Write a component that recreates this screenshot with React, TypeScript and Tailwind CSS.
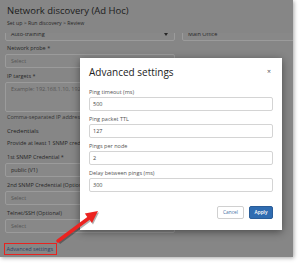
import React from "react";

const font = { fontFamily: '"Open Sans", "Liberation Sans", sans-serif' };

function BgLabel({ children, className = "" }: { children: React.ReactNode; className?: string }) {
  return (
    <div className={"h-[8px] leading-[8px] pl-[2px] text-[5.5px] text-[#262626] whitespace-nowrap overflow-hidden " + className}>
      {children}
    </div>
  );
}

function BgBox({ children, className = "", h = "h-[14px]", placeholder = false }: { children?: React.ReactNode; className?: string; h?: string; placeholder?: boolean }) {
  return (
    <div
      className={
        "relative border border-[#9b9b9b] rounded-[2px] bg-[#888888] px-[5px] flex items-center text-[5.5px] leading-[7px] whitespace-nowrap overflow-hidden " +
        h +
        " " +
        (placeholder ? "text-[#555] " : "text-[#262626] ") +
        className
      }
    >
      {children}
    </div>
  );
}

function ModalField({ label, value, className = "" }: { label: string; value: string; className?: string }) {
  return (
    <div className={className}>
      <div className="h-[8px] leading-[8px] text-[5.5px] text-[#555] whitespace-nowrap">{label}</div>
      <div className="mt-[1px] h-[14px] border border-[#d4d4d4] rounded-[2px] px-[3px] flex items-center text-[5.5px] leading-[7px] text-[#444]">
        {value}
      </div>
    </div>
  );
}

export default function App() {
  return (
    <div className="w-[300px] h-[264px] bg-white relative overflow-hidden" style={font}>
      <div className="w-[293px] h-[257px] bg-[#868686] relative overflow-hidden shadow-[1px_1px_4px_rgba(0,0,0,0.35)] flex flex-col">
        {/* header */}
        <div className="h-[33px] shrink-0 px-[7px] pt-[4px]">
          <div className="h-[14px] leading-[14px] text-[9.5px] text-[#1c1c1c] whitespace-nowrap">Network discovery (Ad Hoc)</div>
          <div className="h-[8px] mt-[1px] leading-[8px] text-[5.2px] text-[#262626] whitespace-nowrap">
            Set up &gt; Run discovery &gt; Review
          </div>
        </div>
        {/* scrolling body */}
        <div className="flex-1 overflow-hidden px-[5px]">
          <div className="mt-[-6px] flex gap-[7px]">
            <BgBox className="w-[170px] shrink-0">
              <span>Auto-training</span>
              <span className="absolute right-[6px] top-[5px] w-0 h-0 border-l-[2.5px] border-r-[2.5px] border-t-[3px] border-l-transparent border-r-transparent border-t-[#262626]" />
            </BgBox>
            <BgBox className="w-[120px] shrink-0">Main Office</BgBox>
          </div>
          <div className="w-[170px]">
            <BgLabel className="mt-[3px]">Network probe *</BgLabel>
            <BgBox className="mt-[2px]" placeholder>Select</BgBox>
            <BgLabel className="mt-[4px]">IP targets *</BgLabel>
            <BgBox className="mt-[2px] !items-start pt-[3px]" h="h-[30px]" placeholder>
              Example: 192.168.1.10, 192.1
            </BgBox>
            <BgLabel className="mt-[1px] text-[4.8px] !text-[#363636]">Comma-separated IP addresses, I</BgLabel>
            <div className="mt-[5px] h-[10px] leading-[10px] pl-[2px] text-[6px] text-[#1f1f1f] whitespace-nowrap">Credentials</div>
            <BgLabel className="mt-[3px]">Provide at least 1 SNMP cred</BgLabel>
            <BgLabel className="mt-[6px]">1st SNMP Credential *</BgLabel>
            <BgBox className="mt-[2px]">public (V1)</BgBox>
            <BgLabel className="mt-[4px]">2nd SNMP Credential (Option</BgLabel>
            <BgBox className="mt-[2px]" placeholder>Select</BgBox>
            <BgLabel className="mt-[4px]">Telnet/SSH (Optional)</BgLabel>
            <BgBox className="mt-[2px]" placeholder>Select</BgBox>
            <div className="mt-[7px] ml-[-1px] inline-flex items-center h-[12px] w-[53px] border-[1.5px] border-[#e8231f] pl-[1.5px]">
              <span className="text-[5.5px] leading-[8px] text-[#2b4163] whitespace-nowrap">Advanced settings</span>
            </div>
          </div>
        </div>

        {/* modal */}
        <div className="absolute left-[80px] top-[58px] w-[202px] h-[172px] bg-white shadow-[0_2px_8px_rgba(0,0,0,0.45)] px-[9px] pt-[8px] flex flex-col">
          <div className="h-[12px] flex items-center justify-between">
            <div className="text-[10px] leading-[12px] text-[#222] whitespace-nowrap">Advanced settings</div>
            <div className="text-[7px] leading-[12px] text-[#555] mr-[2px]">×</div>
          </div>
          <ModalField className="mt-[10px]" label="Ping timeout (ms)" value="500" />
          <ModalField className="mt-[4px]" label="Ping packet TTL" value="127" />
          <ModalField className="mt-[4px]" label="Pings per node" value="2" />
          <ModalField className="mt-[4px]" label="Delay between pings (ms)" value="300" />
          <div className="mt-[14px] flex justify-end gap-[5px]">
            <div className="w-[27px] h-[13px] border border-[#d0d0d0] rounded-[2px] bg-white flex items-center justify-center text-[4.8px] text-[#3f6fa3]">
              Cancel
            </div>
            <div className="w-[24px] h-[13px] border border-[#2a5d98] rounded-[2px] bg-[#2f6cb1] flex items-center justify-center text-[4.8px] font-semibold text-white">
              Apply
            </div>
          </div>
        </div>

        {/* red arrow, drawn over the modal */}
        <svg className="absolute inset-0 pointer-events-none" width="293" height="257" viewBox="0 0 293 257">
          <g transform="translate(1,1.5)" opacity="0.3">
            <line x1="58" y1="241" x2="89" y2="218" stroke="#000" strokeWidth="3.5" />
            <polygon points="98,211 92,223 84.8,213.4" fill="#000" />
          </g>
          <line x1="58" y1="241" x2="89" y2="218" stroke="#ec2320" strokeWidth="3.5" strokeLinecap="round" />
          <polygon points="98,211 92,223 84.8,213.4" fill="#ec2320" />
        </svg>
      </div>
    </div>
  );
}
